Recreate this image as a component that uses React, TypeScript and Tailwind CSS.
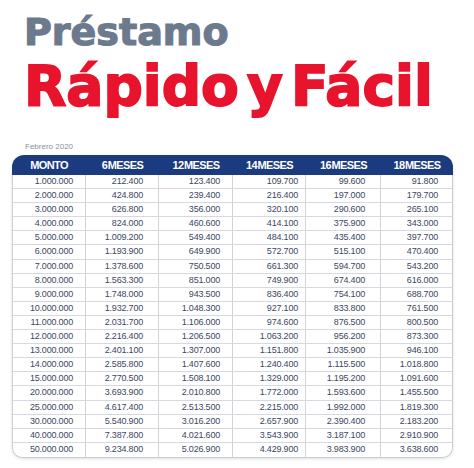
import React from 'react';

const HEADERS = ['MONTO', '6 MESES', '12 MESES', '14 MESES', '16 MESES', '18 MESES'];

const ROWS: string[][] = [
  ['1.000.000', '212.400', '123.400', '109.700', '99.600', '91.800'],
  ['2.000.000', '424.800', '239.400', '216.400', '197.000', '179.700'],
  ['3.000.000', '626.800', '356.000', '320.100', '290.600', '265.100'],
  ['4.000.000', '824.000', '460.600', '414.100', '375.900', '343.000'],
  ['5.000.000', '1.009.200', '549.400', '484.100', '435.400', '397.700'],
  ['6.000.000', '1.193.900', '649.900', '572.700', '515.100', '470.400'],
  ['7.000.000', '1.378.600', '750.500', '661.300', '594.700', '543.200'],
  ['8.000.000', '1.563.300', '851.000', '749.900', '674.400', '616.000'],
  ['9.000.000', '1.748.000', '943.500', '836.400', '754.100', '688.700'],
  ['10.000.000', '1.932.700', '1.048.300', '927.100', '833.800', '761.500'],
  ['11.000.000', '2.031.700', '1.106.000', '974.600', '876.500', '800.500'],
  ['12.000.000', '2.216.400', '1.206.500', '1.063.200', '956.200', '873.300'],
  ['13.000.000', '2.401.100', '1.307.000', '1.151.800', '1.035.900', '946.100'],
  ['14.000.000', '2.585.800', '1.407.600', '1.240.400', '1.115.500', '1.018.800'],
  ['15.000.000', '2.770.500', '1.508.100', '1.329.000', '1.195.200', '1.091.600'],
  ['20.000.000', '3.693.900', '2.010.800', '1.772.000', '1.593.600', '1.455.500'],
  ['25.000.000', '4.617.400', '2.513.500', '2.215.000', '1.992.000', '1.819.300'],
  ['30.000.000', '5.540.900', '3.016.200', '2.657.900', '2.390.400', '2.183.200'],
  ['40.000.000', '7.387.800', '4.021.600', '3.543.900', '3.187.100', '2.910.900'],
  ['50.000.000', '9.234.800', '5.026.900', '4.429.900', '3.983.900', '3.638.600'],
];

// right padding per column, read off the picture
const CELL_PAD = ['pr-[12px]', 'pr-[15px]', 'pr-[12px]', 'pr-[7px]', 'pr-[15px]', 'pr-[14px]'];

export default function App() {
  return (
    <div className="w-[474px] h-[468px] bg-white overflow-hidden font-['Liberation_Sans',Arial,sans-serif]">
      {/* ── Title ── */}
      <div className="pl-[24px] pt-[13px]">
        <h1 className="font-['DejaVu_Sans',sans-serif] font-bold text-[38px] leading-[38px] text-[#6c7a8e] [-webkit-text-stroke:1.2px_#6c7a8e]">
          Préstamo
        </h1>
        <h2 className="mt-[8px] font-['DejaVu_Sans',sans-serif] font-bold text-[55px] leading-[55px] text-[#e8132c] [-webkit-text-stroke:1.8px_#e8132c] [word-spacing:-11px] whitespace-nowrap">
          Rápido y Fácil
        </h2>
      </div>

      {/* ── Rate table ── */}
      <div className="mt-[28px] pl-[25px] text-[8px] leading-[10px] text-[#8a8f99]">Febrero 2020</div>

      <div className="mt-[3px] ml-[12px] w-[441px] shadow-[0_1px_3px_rgba(0,0,0,0.12)] rounded-t-[12px] rounded-b-[10px]">
        <div className="grid grid-cols-[74px_73px_74px_73px_75px_72px] h-[20px] bg-[#1c3a7e] rounded-t-[12px]">
          {HEADERS.map((h) => (
            <div
              key={h}
              className="flex items-center justify-center text-white font-bold text-[11px] tracking-[-0.6px] [word-spacing:-2px]"
            >
              {h}
            </div>
          ))}
        </div>
        <div className="border-x border-b border-[#c9cdd5] rounded-b-[10px] overflow-hidden">
          {ROWS.map((row, i) => (
            <div
              key={i}
              className="grid grid-cols-[73px_73px_74px_73px_75px_71px] h-[14.1px] border-b border-[#d6d9df] last:border-b-0"
            >
              {row.map((v, j) => (
                <div
                  key={j}
                  className={`text-right text-[9px] leading-[13px] tracking-[-0.2px] text-[#3b4763] ${CELL_PAD[j]} ${
                    j < 5 ? 'border-r border-[#cfd3da]' : ''
                  }`}
                >
                  {v}
                </div>
              ))}
            </div>
          ))}
        </div>
      </div>
    </div>
  );
}
